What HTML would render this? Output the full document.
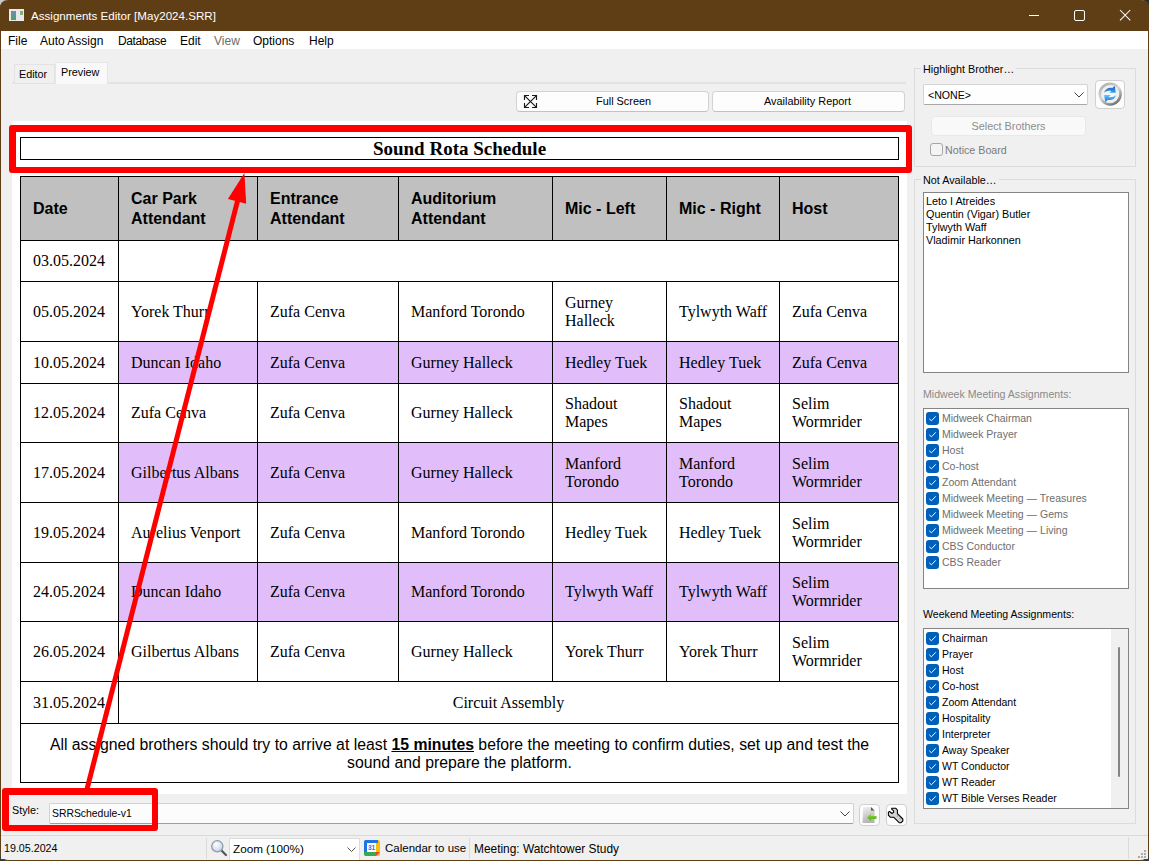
<!DOCTYPE html>
<html><head><meta charset="utf-8">
<style>
*{box-sizing:border-box;margin:0;padding:0}
html,body{width:1149px;height:861px;overflow:hidden;background:#f0f0f0}
body{position:relative;font-family:"Liberation Sans",sans-serif;color:#000}
.a{position:absolute}
.t{position:absolute;white-space:nowrap;line-height:1}
#tl{left:0;top:0;width:12px;height:12px;background:#c9c9c9}
#tr{left:1137px;top:0;width:12px;height:12px;background:#2d2d2d}
#bl{left:0;top:849px;width:12px;height:12px;background:#3a3a3a}
#br{left:1137px;top:849px;width:12px;height:12px;background:#3a3a3a}
#frame{left:0;top:0;width:1149px;height:861px;border:1px solid #5f3e16;border-top:0;border-radius:8px;background:#f0f0f0;overflow:hidden}
#title{left:0;top:0;width:1149px;height:31px;background:#5f3e16}
#menu{left:1px;top:31px;width:1147px;height:18px;background:#fff}
.mi{top:35px;font-size:12px}
.btn{position:absolute;background:#fdfdfd;border:1px solid #d3d3d3;border-bottom-color:#c2c2c2;border-radius:4px}
.grp{position:absolute;border:1px solid #dcdcdc}
.lbl{position:absolute;white-space:nowrap;line-height:1;font-size:10.7px;background:#f0f0f0;padding:0 2px}
.lst{position:absolute;background:#fff;border:1px solid #848484}
.cb{position:absolute;width:13px;height:13px;border-radius:3px;background:#005fb8}
.cb svg{position:absolute;left:0;top:0}
.hc{position:absolute;display:flex;align-items:center;font-weight:bold;font-size:16px;line-height:20px;color:#000}
.bc{position:absolute;display:flex;align-items:center;font-family:"Liberation Serif",serif;font-size:16px;line-height:18px;color:#000}
.fc{position:absolute;display:flex;align-items:center;justify-content:center;text-align:center;font-size:15.8px;line-height:18px;padding-top:2px}
.ci{position:absolute;white-space:nowrap;line-height:1;font-size:10.5px}
</style></head><body>
<div id="tl" class="a"></div><div id="tr" class="a"></div><div id="bl" class="a"></div><div id="br" class="a"></div>
<div id="frame" class="a">
</div>
<!-- title bar -->
<div id="title" class="a" style="border-radius:8px 8px 0 0"></div>
<div class="a" style="left:9px;top:9px;width:15px;height:12px;background:#e9e9ea;border:1px solid #e6ebf4">
  <div class="a" style="left:1px;top:1px;width:5px;height:9px;background:linear-gradient(#6d8fb8,#4fa05a)"></div>
  <div class="a" style="left:10px;top:1px;width:3px;height:4px;background:linear-gradient(#7a9cc8,#7fbf60)"></div>
</div>
<div class="t" style="left:31px;top:10px;font-size:11.6px;color:#fff">Assignments Editor [May2024.SRR]</div>
<div class="a" style="left:1029px;top:15px;width:10px;height:1px;background:#fff"></div>
<div class="a" style="left:1074px;top:10px;width:11px;height:11px;border:1px solid #fff;border-radius:2px"></div>
<svg class="a" style="left:1118px;top:9px" width="14" height="13" viewBox="0 0 14 13"><path d="M2 1 L12.3 11.3 M12.3 1 L2 11.3" stroke="#fff" stroke-width="1.05"/></svg>

<!-- menu -->
<div id="menu" class="a"></div>
<div class="t mi" style="left:8px">File</div>
<div class="t mi" style="left:40px">Auto Assign</div>
<div class="t mi" style="left:118px;letter-spacing:-0.4px">Database</div>
<div class="t mi" style="left:180px">Edit</div>
<div class="t mi" style="left:214px;color:#6d6d6d">View</div>
<div class="t mi" style="left:253px">Options</div>
<div class="t mi" style="left:309px">Help</div>

<!-- tabs -->
<div class="a" style="left:12px;top:82px;width:894px;height:2px;background:#e3e3e3"></div>
<div class="a" style="left:14px;top:64px;width:41px;height:19px;background:#f0f0f0;border:1px solid #e3e3e3;border-bottom:0"></div>
<div class="t" style="left:19px;top:69px;font-size:10.8px">Editor</div>
<div class="a" style="left:55px;top:62px;width:53px;height:22px;background:#f9f9f9;border:1px solid #e6e6e6;border-bottom:0;border-radius:2px 2px 0 0"></div>
<div class="t" style="left:61px;top:67px;font-size:10.8px;color:#000">Preview</div>

<!-- buttons -->
<div class="btn" style="left:516px;top:91px;width:193px;height:21px"></div>
<svg class="a" style="left:523px;top:94px" width="15" height="15" viewBox="0 0 15 15"><g stroke="#1a1a1a" stroke-width="1.15" fill="none"><path d="M1.8 1.8 L13.2 13.2 M13.2 1.8 L1.8 13.2"/><path d="M1.5 6 V1.5 H6 M9 1.5 H13.5 V6 M13.5 9 V13.5 H9 M6 13.5 H1.5 V9"/></g></svg>
<div class="t" style="left:596px;top:96px;font-size:10.9px">Full Screen</div>
<div class="btn" style="left:712px;top:91px;width:193px;height:21px"></div>
<div class="t" style="left:764px;top:96px;font-size:10.9px">Availability Report</div>

<!-- preview white -->
<div class="a" style="left:12px;top:121px;width:895px;height:673px;background:#fff"></div>

<!--TABLE-->
<div class="a" style="left:20px;top:176px;width:879px;height:65px;background:#c0c0c0"></div>
<div class="a" style="left:119px;top:342px;width:779px;height:41px;background:#e1befa"></div>
<div class="a" style="left:119px;top:443px;width:779px;height:59px;background:#e1befa"></div>
<div class="a" style="left:119px;top:563px;width:779px;height:58px;background:#e1befa"></div>
<div class="a" style="left:20px;top:176px;width:879px;height:1px;background:#000"></div>
<div class="a" style="left:20px;top:240px;width:879px;height:1px;background:#000"></div>
<div class="a" style="left:20px;top:281px;width:879px;height:1px;background:#000"></div>
<div class="a" style="left:20px;top:341px;width:879px;height:1px;background:#000"></div>
<div class="a" style="left:20px;top:383px;width:879px;height:1px;background:#000"></div>
<div class="a" style="left:20px;top:442px;width:879px;height:1px;background:#000"></div>
<div class="a" style="left:20px;top:502px;width:879px;height:1px;background:#000"></div>
<div class="a" style="left:20px;top:562px;width:879px;height:1px;background:#000"></div>
<div class="a" style="left:20px;top:621px;width:879px;height:1px;background:#000"></div>
<div class="a" style="left:20px;top:681px;width:879px;height:1px;background:#000"></div>
<div class="a" style="left:20px;top:723px;width:879px;height:1px;background:#000"></div>
<div class="a" style="left:20px;top:782px;width:879px;height:1px;background:#000"></div>
<div class="a" style="left:20px;top:176px;width:1px;height:607px;background:#000"></div>
<div class="a" style="left:898px;top:176px;width:1px;height:607px;background:#000"></div>
<div class="a" style="left:118px;top:176px;width:1px;height:548px;background:#000"></div>
<div class="a" style="left:257px;top:176px;width:1px;height:65px;background:#000"></div>
<div class="a" style="left:257px;top:281px;width:1px;height:401px;background:#000"></div>
<div class="a" style="left:398px;top:176px;width:1px;height:65px;background:#000"></div>
<div class="a" style="left:398px;top:281px;width:1px;height:401px;background:#000"></div>
<div class="a" style="left:552px;top:176px;width:1px;height:65px;background:#000"></div>
<div class="a" style="left:552px;top:281px;width:1px;height:401px;background:#000"></div>
<div class="a" style="left:666px;top:176px;width:1px;height:65px;background:#000"></div>
<div class="a" style="left:666px;top:281px;width:1px;height:401px;background:#000"></div>
<div class="a" style="left:779px;top:176px;width:1px;height:65px;background:#000"></div>
<div class="a" style="left:779px;top:281px;width:1px;height:401px;background:#000"></div>
<div class="hc" style="left:33px;top:177px;width:85px;height:63px">Date</div>
<div class="hc" style="left:131px;top:177px;width:126px;height:63px">Car Park<br>Attendant</div>
<div class="hc" style="left:270px;top:177px;width:128px;height:63px">Entrance<br>Attendant</div>
<div class="hc" style="left:411px;top:177px;width:141px;height:63px">Auditorium<br>Attendant</div>
<div class="hc" style="left:565px;top:177px;width:101px;height:63px">Mic - Left</div>
<div class="hc" style="left:679px;top:177px;width:100px;height:63px">Mic - Right</div>
<div class="hc" style="left:792px;top:177px;width:106px;height:63px">Host</div>
<div class="bc" style="left:33px;top:241px;width:85px;height:40px">03.05.2024</div>
<div class="bc" style="left:33px;top:282px;width:85px;height:59px">05.05.2024</div>
<div class="bc" style="left:131px;top:282px;width:126px;height:59px">Yorek Thurr</div>
<div class="bc" style="left:270px;top:282px;width:128px;height:59px">Zufa Cenva</div>
<div class="bc" style="left:411px;top:282px;width:141px;height:59px">Manford Torondo</div>
<div class="bc" style="left:565px;top:282px;width:101px;height:59px">Gurney<br>Halleck</div>
<div class="bc" style="left:679px;top:282px;width:100px;height:59px">Tylwyth Waff</div>
<div class="bc" style="left:792px;top:282px;width:106px;height:59px">Zufa Cenva</div>
<div class="bc" style="left:33px;top:342px;width:85px;height:41px">10.05.2024</div>
<div class="bc" style="left:131px;top:342px;width:126px;height:41px">Duncan Idaho</div>
<div class="bc" style="left:270px;top:342px;width:128px;height:41px">Zufa Cenva</div>
<div class="bc" style="left:411px;top:342px;width:141px;height:41px">Gurney Halleck</div>
<div class="bc" style="left:565px;top:342px;width:101px;height:41px">Hedley Tuek</div>
<div class="bc" style="left:679px;top:342px;width:100px;height:41px">Hedley Tuek</div>
<div class="bc" style="left:792px;top:342px;width:106px;height:41px">Zufa Cenva</div>
<div class="bc" style="left:33px;top:384px;width:85px;height:58px">12.05.2024</div>
<div class="bc" style="left:131px;top:384px;width:126px;height:58px">Zufa Cenva</div>
<div class="bc" style="left:270px;top:384px;width:128px;height:58px">Zufa Cenva</div>
<div class="bc" style="left:411px;top:384px;width:141px;height:58px">Gurney Halleck</div>
<div class="bc" style="left:565px;top:384px;width:101px;height:58px">Shadout<br>Mapes</div>
<div class="bc" style="left:679px;top:384px;width:100px;height:58px">Shadout<br>Mapes</div>
<div class="bc" style="left:792px;top:384px;width:106px;height:58px">Selim<br>Wormrider</div>
<div class="bc" style="left:33px;top:443px;width:85px;height:59px">17.05.2024</div>
<div class="bc" style="left:131px;top:443px;width:126px;height:59px">Gilbertus Albans</div>
<div class="bc" style="left:270px;top:443px;width:128px;height:59px">Zufa Cenva</div>
<div class="bc" style="left:411px;top:443px;width:141px;height:59px">Gurney Halleck</div>
<div class="bc" style="left:565px;top:443px;width:101px;height:59px">Manford<br>Torondo</div>
<div class="bc" style="left:679px;top:443px;width:100px;height:59px">Manford<br>Torondo</div>
<div class="bc" style="left:792px;top:443px;width:106px;height:59px">Selim<br>Wormrider</div>
<div class="bc" style="left:33px;top:503px;width:85px;height:59px">19.05.2024</div>
<div class="bc" style="left:131px;top:503px;width:126px;height:59px">Aurelius Venport</div>
<div class="bc" style="left:270px;top:503px;width:128px;height:59px">Zufa Cenva</div>
<div class="bc" style="left:411px;top:503px;width:141px;height:59px">Manford Torondo</div>
<div class="bc" style="left:565px;top:503px;width:101px;height:59px">Hedley Tuek</div>
<div class="bc" style="left:679px;top:503px;width:100px;height:59px">Hedley Tuek</div>
<div class="bc" style="left:792px;top:503px;width:106px;height:59px">Selim<br>Wormrider</div>
<div class="bc" style="left:33px;top:563px;width:85px;height:58px">24.05.2024</div>
<div class="bc" style="left:131px;top:563px;width:126px;height:58px">Duncan Idaho</div>
<div class="bc" style="left:270px;top:563px;width:128px;height:58px">Zufa Cenva</div>
<div class="bc" style="left:411px;top:563px;width:141px;height:58px">Manford Torondo</div>
<div class="bc" style="left:565px;top:563px;width:101px;height:58px">Tylwyth Waff</div>
<div class="bc" style="left:679px;top:563px;width:100px;height:58px">Tylwyth Waff</div>
<div class="bc" style="left:792px;top:563px;width:106px;height:58px">Selim<br>Wormrider</div>
<div class="bc" style="left:33px;top:622px;width:85px;height:59px">26.05.2024</div>
<div class="bc" style="left:131px;top:622px;width:126px;height:59px">Gilbertus Albans</div>
<div class="bc" style="left:270px;top:622px;width:128px;height:59px">Zufa Cenva</div>
<div class="bc" style="left:411px;top:622px;width:141px;height:59px">Gurney Halleck</div>
<div class="bc" style="left:565px;top:622px;width:101px;height:59px">Yorek Thurr</div>
<div class="bc" style="left:679px;top:622px;width:100px;height:59px">Yorek Thurr</div>
<div class="bc" style="left:792px;top:622px;width:106px;height:59px">Selim<br>Wormrider</div>
<div class="bc" style="left:33px;top:682px;width:85px;height:41px">31.05.2024</div>
<div class="bc" style="left:119px;top:682px;width:779px;height:41px;justify-content:center">Circuit Assembly</div>
<div class="fc" style="left:21px;top:724px;width:877px;height:58px"><div>All assigned brothers should try to arrive at least <b><u>15 minutes</u></b> before the meeting to confirm duties, set up and test the<br>sound and prepare the platform.</div></div>
<div class="a" style="left:20px;top:137px;width:879px;height:23px;border:1px solid #000"></div>
<div class="t" style="left:20px;top:137px;width:879px;height:23px;line-height:23px;text-align:center;font-family:'Liberation Serif',serif;font-weight:bold;font-size:19px">Sound Rota Schedule</div>
<!--RIGHT-->
<div class="grp" style="left:914px;top:68px;width:222px;height:99px"></div>
<div class="lbl" style="left:921px;top:64px;font-size:10.8px">Highlight Brother…</div>
<div class="a" style="left:923px;top:84px;width:165px;height:21px;background:#fefefe;border:1px solid #d4d4d4;border-bottom-color:#a8a8a8;border-radius:2px"></div>
<div class="t" style="left:928px;top:90px;font-size:10.6px">&lt;NONE&gt;</div>
<svg class="a" style="left:1074px;top:92px" width="10" height="6" viewBox="0 0 10 6"><path d="M0.5 0.5 L5 5 L9.5 0.5" stroke="#444" stroke-width="1" fill="none"/></svg>
<div class="a" style="left:1095px;top:80px;width:30px;height:29px;background:#fdfdfd;border:1px solid #d0d0d0;border-radius:4px"></div>
<svg class="a" style="left:1096px;top:80px" width="28" height="28" viewBox="0 0 28 28">
<defs><radialGradient id="rg" cx="50%" cy="45%" r="55%"><stop offset="0" stop-color="#fafafa"/><stop offset="0.8" stop-color="#ededed"/><stop offset="1" stop-color="#d5d5d5"/></radialGradient>
<linearGradient id="ring" x1="0.2" y1="0" x2="0.8" y2="1"><stop offset="0" stop-color="#b0b0b0"/><stop offset="0.45" stop-color="#d8d8d8"/><stop offset="1" stop-color="#6a6a6a"/></linearGradient>
<linearGradient id="blu" x1="0" y1="0" x2="0" y2="1"><stop offset="0" stop-color="#1d55c0"/><stop offset="1" stop-color="#39a8f2"/></linearGradient>
<linearGradient id="blu2" x1="0" y1="0" x2="0" y2="1"><stop offset="0" stop-color="#5cc8ff"/><stop offset="1" stop-color="#1f6fdc"/></linearGradient></defs>
<circle cx="14.2" cy="14.1" r="10.4" fill="url(#rg)" stroke="url(#ring)" stroke-width="2.6"/>
<path d="M8 12.6 C9.2 8.8 12.5 7.3 16.3 7.9 L18.7 5.9 L19.9 12.8 L13.2 12.8 L15.4 10.9 C12.6 10.2 10.2 11 8 12.6 Z" fill="url(#blu)"/>
<path d="M20 15.2 C18.8 19 15.5 20.5 11.7 19.9 L9.3 21.9 L8.1 15 L14.8 15 L12.6 16.9 C15.4 17.6 17.8 16.8 20 15.2 Z" fill="url(#blu2)"/>
</svg>
<div class="a" style="left:931px;top:116px;width:155px;height:20px;background:#f9f9f9;border:1px solid #e8e8e8;border-radius:4px"></div>
<div class="t" style="left:931px;top:121px;width:155px;text-align:center;font-size:10.8px;color:#8d8d8d">Select Brothers</div>
<div class="a" style="left:930px;top:143px;width:13px;height:13px;background:#f4f4f4;border:1px solid #a6a6a6;border-radius:3px"></div>
<div class="t" style="left:945px;top:145px;font-size:10.7px;color:#7b7b7b">Notice Board</div>
<div class="grp" style="left:914px;top:179px;width:222px;height:645px"></div>
<div class="lbl" style="left:921px;top:175px;font-size:10.8px">Not Available…</div>
<div class="lst" style="left:923px;top:192px;width:206px;height:181px"></div>
<div class="t" style="left:926px;top:196px;font-size:10.8px">Leto I Atreides</div>
<div class="t" style="left:926px;top:209px;font-size:10.8px">Quentin (Vigar) Butler</div>
<div class="t" style="left:926px;top:222px;font-size:10.8px">Tylwyth Waff</div>
<div class="t" style="left:926px;top:235px;font-size:10.8px">Vladimir Harkonnen</div>
<div class="t" style="left:923px;top:389px;font-size:10.6px;color:#8a8a8a">Midweek Meeting Assignments:</div>
<div class="lst" style="left:923px;top:408px;width:206px;height:181px"></div>
<div class="cb" style="left:926px;top:412px"><svg width="13" height="13" viewBox="0 0 13 13"><path d="M3.3 6.8 L5.4 8.8 L9.8 4.3" stroke="#fff" stroke-width="1" fill="none"/></svg></div>
<div class="ci" style="left:942px;top:413px;color:#6e6e6e">Midweek Chairman</div>
<div class="cb" style="left:926px;top:428px"><svg width="13" height="13" viewBox="0 0 13 13"><path d="M3.3 6.8 L5.4 8.8 L9.8 4.3" stroke="#fff" stroke-width="1" fill="none"/></svg></div>
<div class="ci" style="left:942px;top:429px;color:#6e6e6e">Midweek Prayer</div>
<div class="cb" style="left:926px;top:444px"><svg width="13" height="13" viewBox="0 0 13 13"><path d="M3.3 6.8 L5.4 8.8 L9.8 4.3" stroke="#fff" stroke-width="1" fill="none"/></svg></div>
<div class="ci" style="left:942px;top:445px;color:#6e6e6e">Host</div>
<div class="cb" style="left:926px;top:460px"><svg width="13" height="13" viewBox="0 0 13 13"><path d="M3.3 6.8 L5.4 8.8 L9.8 4.3" stroke="#fff" stroke-width="1" fill="none"/></svg></div>
<div class="ci" style="left:942px;top:461px;color:#6e6e6e">Co-host</div>
<div class="cb" style="left:926px;top:476px"><svg width="13" height="13" viewBox="0 0 13 13"><path d="M3.3 6.8 L5.4 8.8 L9.8 4.3" stroke="#fff" stroke-width="1" fill="none"/></svg></div>
<div class="ci" style="left:942px;top:477px;color:#6e6e6e">Zoom Attendant</div>
<div class="cb" style="left:926px;top:492px"><svg width="13" height="13" viewBox="0 0 13 13"><path d="M3.3 6.8 L5.4 8.8 L9.8 4.3" stroke="#fff" stroke-width="1" fill="none"/></svg></div>
<div class="ci" style="left:942px;top:493px;color:#6e6e6e">Midweek Meeting — Treasures</div>
<div class="cb" style="left:926px;top:508px"><svg width="13" height="13" viewBox="0 0 13 13"><path d="M3.3 6.8 L5.4 8.8 L9.8 4.3" stroke="#fff" stroke-width="1" fill="none"/></svg></div>
<div class="ci" style="left:942px;top:509px;color:#6e6e6e">Midweek Meeting — Gems</div>
<div class="cb" style="left:926px;top:524px"><svg width="13" height="13" viewBox="0 0 13 13"><path d="M3.3 6.8 L5.4 8.8 L9.8 4.3" stroke="#fff" stroke-width="1" fill="none"/></svg></div>
<div class="ci" style="left:942px;top:525px;color:#6e6e6e">Midweek Meeting — Living</div>
<div class="cb" style="left:926px;top:540px"><svg width="13" height="13" viewBox="0 0 13 13"><path d="M3.3 6.8 L5.4 8.8 L9.8 4.3" stroke="#fff" stroke-width="1" fill="none"/></svg></div>
<div class="ci" style="left:942px;top:541px;color:#6e6e6e">CBS Conductor</div>
<div class="cb" style="left:926px;top:556px"><svg width="13" height="13" viewBox="0 0 13 13"><path d="M3.3 6.8 L5.4 8.8 L9.8 4.3" stroke="#fff" stroke-width="1" fill="none"/></svg></div>
<div class="ci" style="left:942px;top:557px;color:#6e6e6e">CBS Reader</div>
<div class="t" style="left:923px;top:609px;font-size:10.6px">Weekend Meeting Assignments:</div>
<div class="lst" style="left:923px;top:628px;width:206px;height:181px"></div>
<div class="a" style="left:1111px;top:629px;width:17px;height:179px;background:#f0f0f0"></div>
<div class="a" style="left:1118px;top:647px;width:2px;height:130px;background:#858585;border-radius:1px"></div>
<div class="cb" style="left:926px;top:632px"><svg width="13" height="13" viewBox="0 0 13 13"><path d="M3.3 6.8 L5.4 8.8 L9.8 4.3" stroke="#fff" stroke-width="1" fill="none"/></svg></div>
<div class="ci" style="left:942px;top:633px;color:#000">Chairman</div>
<div class="cb" style="left:926px;top:648px"><svg width="13" height="13" viewBox="0 0 13 13"><path d="M3.3 6.8 L5.4 8.8 L9.8 4.3" stroke="#fff" stroke-width="1" fill="none"/></svg></div>
<div class="ci" style="left:942px;top:649px;color:#000">Prayer</div>
<div class="cb" style="left:926px;top:664px"><svg width="13" height="13" viewBox="0 0 13 13"><path d="M3.3 6.8 L5.4 8.8 L9.8 4.3" stroke="#fff" stroke-width="1" fill="none"/></svg></div>
<div class="ci" style="left:942px;top:665px;color:#000">Host</div>
<div class="cb" style="left:926px;top:680px"><svg width="13" height="13" viewBox="0 0 13 13"><path d="M3.3 6.8 L5.4 8.8 L9.8 4.3" stroke="#fff" stroke-width="1" fill="none"/></svg></div>
<div class="ci" style="left:942px;top:681px;color:#000">Co-host</div>
<div class="cb" style="left:926px;top:696px"><svg width="13" height="13" viewBox="0 0 13 13"><path d="M3.3 6.8 L5.4 8.8 L9.8 4.3" stroke="#fff" stroke-width="1" fill="none"/></svg></div>
<div class="ci" style="left:942px;top:697px;color:#000">Zoom Attendant</div>
<div class="cb" style="left:926px;top:712px"><svg width="13" height="13" viewBox="0 0 13 13"><path d="M3.3 6.8 L5.4 8.8 L9.8 4.3" stroke="#fff" stroke-width="1" fill="none"/></svg></div>
<div class="ci" style="left:942px;top:713px;color:#000">Hospitality</div>
<div class="cb" style="left:926px;top:728px"><svg width="13" height="13" viewBox="0 0 13 13"><path d="M3.3 6.8 L5.4 8.8 L9.8 4.3" stroke="#fff" stroke-width="1" fill="none"/></svg></div>
<div class="ci" style="left:942px;top:729px;color:#000">Interpreter</div>
<div class="cb" style="left:926px;top:744px"><svg width="13" height="13" viewBox="0 0 13 13"><path d="M3.3 6.8 L5.4 8.8 L9.8 4.3" stroke="#fff" stroke-width="1" fill="none"/></svg></div>
<div class="ci" style="left:942px;top:745px;color:#000">Away Speaker</div>
<div class="cb" style="left:926px;top:760px"><svg width="13" height="13" viewBox="0 0 13 13"><path d="M3.3 6.8 L5.4 8.8 L9.8 4.3" stroke="#fff" stroke-width="1" fill="none"/></svg></div>
<div class="ci" style="left:942px;top:761px;color:#000">WT Conductor</div>
<div class="cb" style="left:926px;top:776px"><svg width="13" height="13" viewBox="0 0 13 13"><path d="M3.3 6.8 L5.4 8.8 L9.8 4.3" stroke="#fff" stroke-width="1" fill="none"/></svg></div>
<div class="ci" style="left:942px;top:777px;color:#000">WT Reader</div>
<div class="cb" style="left:926px;top:792px"><svg width="13" height="13" viewBox="0 0 13 13"><path d="M3.3 6.8 L5.4 8.8 L9.8 4.3" stroke="#fff" stroke-width="1" fill="none"/></svg></div>
<div class="ci" style="left:942px;top:793px;color:#000">WT Bible Verses Reader</div>
<!--BOTTOM-->
<div class="t" style="left:12px;top:805px;font-size:10.8px">Style:</div>
<div class="a" style="left:49px;top:803px;width:805px;height:21px;background:#fcfcfc;border:1px solid #d2d2d2;border-bottom-color:#9e9e9e;border-radius:2px"></div>
<div class="t" style="left:52px;top:809px;font-size:10.4px">SRRSchedule-v1</div>
<svg class="a" style="left:840px;top:811px" width="10" height="6" viewBox="0 0 10 6"><path d="M0.5 0.5 L5 5 L9.5 0.5" stroke="#444" stroke-width="1" fill="none"/></svg>
<div class="a" style="left:859px;top:804px;width:21px;height:22px;background:#fdfdfd;border:1px solid #d0d0d0;border-radius:4px"></div>
<svg class="a" style="left:860px;top:804px" width="20" height="22" viewBox="0 0 20 22">
<defs><linearGradient id="pg" x1="0" y1="0" x2="0.3" y2="1"><stop offset="0" stop-color="#f2f2f2"/><stop offset="1" stop-color="#b4b4b4"/></linearGradient>
<linearGradient id="gr" x1="0" y1="0" x2="0" y2="1"><stop offset="0" stop-color="#8ad43c"/><stop offset="1" stop-color="#4fae10"/></linearGradient></defs>
<path d="M3 3 H11 L14.5 6.5 V19 H2.5 Z" fill="url(#pg)"/>
<path d="M11 3 L14.5 6.5 H11 Z" fill="#555"/>
<path d="M7 13.5 L11 10 V12 H16.5 V15 H11 V17 Z" fill="url(#gr)"/>
</svg>
<div class="a" style="left:886px;top:804px;width:21px;height:22px;background:#fdfdfd;border:1px solid #d0d0d0;border-radius:4px"></div>
<svg class="a" style="left:886px;top:804px" width="21" height="22" viewBox="0 0 21 22">
<path d="M5.7 4.3 L9.9 4.3 L11.4 6 L11.4 9.6 L16.8 15 L16.8 17 L14.8 18.8 L13.4 18.8 L7.6 13.2 L4.2 13.2 L2.4 11.2 L2.4 8.2 L3.6 7.4 L5.9 9.5 L7.6 8.4 L7.6 6.9 L5.7 5.2 Z" fill="#d4d4d4" stroke="#000" stroke-width="1.1" stroke-linejoin="round"/>
<circle cx="11.3" cy="12" r="0.6" fill="#777"/><circle cx="14" cy="14.8" r="0.6" fill="#777"/>
</svg>
<div class="a" style="left:1px;top:835px;width:1147px;height:1px;background:#d9d9d9"></div>
<div class="a" style="left:1px;top:836px;width:1147px;height:23px;background:#f0f0f0"></div>
<div class="t" style="left:4px;top:843px;font-size:10.7px">19.05.2024</div>
<div class="a" style="left:206px;top:838px;width:1px;height:21px;background:#dadada"></div>
<svg class="a" style="left:210px;top:839px" width="18" height="18" viewBox="0 0 18 18">
<defs><radialGradient id="lens" cx="40%" cy="35%" r="60%"><stop offset="0" stop-color="#ffffff"/><stop offset="1" stop-color="#c9d6ea"/></radialGradient></defs>
<path d="M10.5 10.5 L16 16" stroke="#555" stroke-width="2.2" stroke-linecap="round"/>
<circle cx="7.3" cy="7.3" r="5.6" fill="url(#lens)" stroke="#8f9aaa" stroke-width="1.3"/>
</svg>
<div class="a" style="left:229px;top:838px;width:131px;height:22px;background:#fff;border:1px solid #dcdcdc;border-bottom:0"></div>
<div class="t" style="left:233px;top:843px;font-size:11.7px">Zoom (100%)</div>
<svg class="a" style="left:347px;top:847px" width="9" height="5" viewBox="0 0 9 5"><path d="M0.5 0.5 L4.5 4.5 L8.5 0.5" stroke="#555" stroke-width="1" fill="none"/></svg>
<svg class="a" style="left:364px;top:840px" width="16" height="16" viewBox="0 0 16 16">
<rect x="0" y="0" width="16" height="16" rx="2" fill="#fbbc04"/>
<path d="M2 0 H14 V3 H0 V2 A2 2 0 0 1 2 0Z" fill="#1a73e8"/>
<rect x="0" y="2" width="3" height="12" fill="#1a73e8"/>
<path d="M0 12 H12 V16 H2 A2 2 0 0 1 0 14 Z" fill="#34a853"/>
<path d="M12 12 H16 L12 16 Z" fill="#ea4335"/>
<rect x="3" y="3" width="9" height="9" fill="#fff"/>
<text x="7.5" y="10.2" font-family="Liberation Sans" font-size="6.5" font-weight="bold" fill="#1a73e8" text-anchor="middle">31</text>
</svg>
<div class="t" style="left:385px;top:843px;font-size:11.5px">Calendar to use</div>
<div class="a" style="left:469px;top:838px;width:1px;height:21px;background:#dadada"></div>
<div class="t" style="left:474px;top:844px;font-size:11.9px">Meeting: Watchtower Study</div>
<div class="a" style="left:1128px;top:837px;width:1px;height:22px;background:#dadada"></div>
<div class="a" style="left:1144px;top:850px;width:2px;height:2px;background:#ababab"></div>
<div class="a" style="left:1141px;top:853px;width:2px;height:2px;background:#ababab"></div>
<div class="a" style="left:1144px;top:853px;width:2px;height:2px;background:#ababab"></div>
<div class="a" style="left:1138px;top:856px;width:2px;height:2px;background:#ababab"></div>
<div class="a" style="left:1141px;top:856px;width:2px;height:2px;background:#ababab"></div>
<div class="a" style="left:1144px;top:856px;width:2px;height:2px;background:#ababab"></div>
<!--ANNOT-->
<div class="a" style="left:9px;top:125px;width:903px;height:48px;border:solid #ff0000;border-width:7px 6px 6px 7px;border-radius:3px"></div>
<div class="a" style="left:2px;top:788px;width:156px;height:43px;border:solid #ff0000;border-width:7px 6px 6px 7px;border-radius:3px"></div>
<svg class="a" style="left:0;top:0" width="1149" height="861" viewBox="0 0 1149 861">
<path d="M86 793 L237.5 201" stroke="#ff0000" stroke-width="5" fill="none"/>
<path d="M244.4 173 L227.9 199 L246.2 203.7 Z" fill="#ff0000"/>
</svg>
</body></html>
